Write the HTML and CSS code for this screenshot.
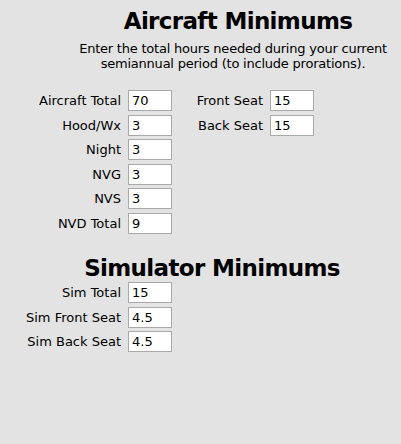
FILE: index.html
```html
<!DOCTYPE html>
<html>
<head>
<meta charset="utf-8">
<link rel="stylesheet" href="styles.css">
</head>
<body>
<div class="page">
  <h1 class="title title-aircraft">Aircraft Minimums</h1>
  <p class="intro">Enter the total hours needed during your current<br>semiannual period (to include prorations).</p>
  <div class="grid">
    <label class="lbl">Aircraft Total</label><input class="field" type="text" value="70">
    <label class="lbl">Front Seat</label><input class="field" type="text" value="15">
    <label class="lbl">Hood/Wx</label><input class="field" type="text" value="3">
    <label class="lbl">Back Seat</label><input class="field" type="text" value="15">
    <label class="lbl">Night</label><input class="field" type="text" value="3"><span></span><span></span>
    <label class="lbl">NVG</label><input class="field" type="text" value="3"><span></span><span></span>
    <label class="lbl">NVS</label><input class="field" type="text" value="3"><span></span><span></span>
    <label class="lbl">NVD Total</label><input class="field" type="text" value="9"><span></span><span></span>
  </div>
  <h2 class="title title-sim">Simulator Minimums</h2>
  <div class="grid grid-sim">
    <label class="lbl">Sim Total</label><input class="field" type="text" value="15">
    <label class="lbl">Sim Front Seat</label><input class="field" type="text" value="4.5">
    <label class="lbl">Sim Back Seat</label><input class="field" type="text" value="4.5">
  </div>
</div>
</body>
</html>
```
FILE: styles.css
```css
html, body {
  margin: 0;
  padding: 0;
  background: #e3e3e3;
}
body {
  font-family: "DejaVu Sans", Verdana, sans-serif;
  color: #000;
  width: 401px;
  height: 444px;
  overflow: hidden;
}
.page {
  padding-top: 7px;
}
.title {
  margin: 0;
  font-size: 23px;
  font-weight: bold;
  line-height: 28px;
  text-align: center;
  letter-spacing: -0.65px;
}
.title-aircraft {
  padding-left: 75px;
}
.intro {
  margin: 6px 0 0 0;
  padding-left: 65px;
  font-size: 13px;
  line-height: 15px;
  text-align: center;
  letter-spacing: -0.22px;
}
.grid {
  display: grid;
  grid-template-columns: 121px 44px 84px 44px;
  column-gap: 7px;
  row-gap: 3.6px;
  align-items: center;
  margin-top: 19px;
}
.lbl {
  font-size: 13px;
  text-align: right;
  white-space: nowrap;
}
.field {
  box-sizing: border-box;
  width: 44px;
  height: 21px;
  margin: 0;
  padding: 0 0 0 3px;
  border: 1px solid #a9a9a9;
  background: #fff;
  font-family: "DejaVu Sans", Verdana, sans-serif;
  font-size: 13px;
  color: #000;
}
.title-sim {
  margin-top: 20px;
  padding-left: 23px;
}
.grid-sim {
  grid-template-columns: 121px 44px;
  margin-top: 0;
}
```
